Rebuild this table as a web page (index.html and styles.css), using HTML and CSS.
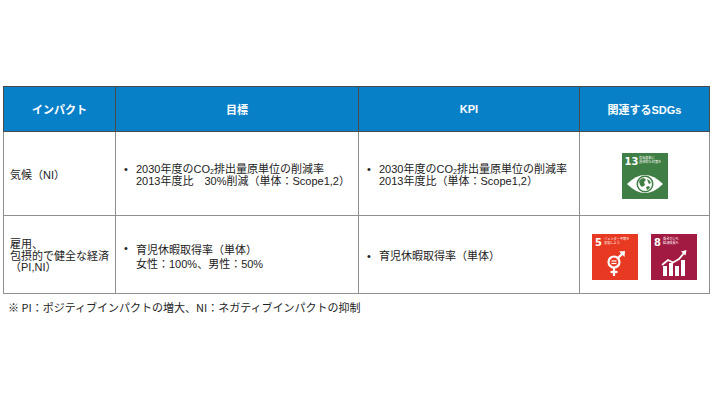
FILE: index.html
```html
<!DOCTYPE html>
<html lang="ja">
<head>
<meta charset="utf-8">
<link rel="stylesheet" href="styles.css">
</head>
<body>
<div class="wrap">
<table class="kpi">
  <colgroup>
    <col class="c1"><col class="c2"><col class="c3"><col class="c4">
  </colgroup>
  <thead>
    <tr class="head">
      <th>インパクト</th>
      <th>目標</th>
      <th>KPI</th>
      <th>関連するSDGs</th>
    </tr>
  </thead>
  <tbody>
    <tr class="r1">
      <td class="imp">気候（NI）</td>
      <td>
        <div class="item"><span class="dot">•</span><div>2030年度のCO<sub>2</sub>排出量原単位の削減率<br>2013年度比　30%削減（単体：Scope1,2）</div></div>
      </td>
      <td>
        <div class="item"><span class="dot">•</span><div>2030年度のCO<sub>2</sub>排出量原単位の削減率<br>2013年度比（単体：Scope1,2）</div></div>
      </td>
      <td class="sdg">
        <div class="icons">
          <svg class="icon" viewBox="0 0 46 46" width="46" height="46">
            <rect width="46" height="46" fill="#3f7e44"/>
            <text x="2.5" y="12" class="num">13</text>
            <text x="17" y="6" class="tiny">気候変動に</text>
            <text x="17" y="10" class="tiny">具体的な対策を</text>
            <path d="M5 31 Q23 13 41 31 Q23 49 5 31 Z" fill="#fff"/>
            <circle cx="23" cy="31" r="8.5" fill="#3f7e44"/>
            <circle cx="23" cy="31" r="7" fill="#fff"/>
            <path d="M17 28 Q19 25 22 25 L24 27 L22 29 L23 32 L20 34 L18 32 Z" fill="#3f7e44"/>
            <path d="M25 26 Q28 27 29 30 L27 31 L26 29 Z" fill="#3f7e44"/>
            <path d="M24 34 L27 33 L28 35 L25 37 Z" fill="#3f7e44"/>
          </svg>
        </div>
      </td>
    </tr>
    <tr class="r2">
      <td class="imp">雇用、<br>包摂的で健全な経済<br>（PI,NI）</td>
      <td>
        <div class="item"><span class="dot">•</span><div class="tall">育児休暇取得率（単体）<br>女性：100%、男性：50%</div></div>
      </td>
      <td>
        <div class="item"><span class="dot">•</span><div>育児休暇取得率（単体）</div></div>
      </td>
      <td class="sdg">
        <div class="icons two">
          <svg class="icon" viewBox="0 0 46 46" width="46" height="46">
            <rect width="46" height="46" fill="#e83a22"/>
            <text x="3" y="12" class="num">5</text>
            <text x="12" y="6" class="tiny">ジェンダー平等を</text>
            <text x="12" y="10" class="tiny">実現しよう</text>
            <circle cx="22" cy="28" r="5.5" fill="none" stroke="#fff" stroke-width="2.2"/>
            <line x1="19.5" y1="27" x2="24.5" y2="27" stroke="#fff" stroke-width="1.2"/>
            <line x1="19.5" y1="29.5" x2="24.5" y2="29.5" stroke="#fff" stroke-width="1.2"/>
            <line x1="26" y1="24" x2="31" y2="19" stroke="#fff" stroke-width="2.2"/>
            <path d="M27 17.5 L33 17 L32.5 23 Z" fill="#fff"/>
            <line x1="22" y1="33.5" x2="22" y2="42" stroke="#fff" stroke-width="2.2"/>
            <line x1="18.5" y1="38" x2="25.5" y2="38" stroke="#fff" stroke-width="2.2"/>
          </svg>
          <svg class="icon" viewBox="0 0 46 46" width="46" height="46">
            <rect width="46" height="46" fill="#a21942"/>
            <text x="3" y="12" class="num">8</text>
            <text x="12" y="6" class="tiny">働きがいも</text>
            <text x="12" y="10" class="tiny">経済成長も</text>
            <rect x="12" y="32" width="4" height="10" fill="#fff"/>
            <rect x="18" y="29" width="4" height="13" fill="#fff"/>
            <rect x="24" y="32" width="4" height="10" fill="#fff"/>
            <rect x="30" y="26" width="4" height="16" fill="#fff"/>
            <polyline points="11,31 17,26 22,28.5 28,25 33,19" fill="none" stroke="#fff" stroke-width="1.8"/>
            <path d="M30 17.5 L35.5 16 L34.5 21.5 Z" fill="#fff"/>
          </svg>
        </div>
      </td>
    </tr>
  </tbody>
</table>
<p class="note">※ PI：ポジティブインパクトの増大、NI：ネガティブインパクトの抑制</p>
</div>
</body>
</html>
```
FILE: styles.css
```css
html, body {
  margin: 0;
  padding: 0;
  background: #fff;
}
body {
  font-family: "Liberation Sans", "Noto Sans CJK JP", sans-serif;
  font-size: 11px;
  color: #222;
}
.wrap {
  padding: 86px 0 0 3px;
}
.kpi {
  width: 706px;
  border-collapse: collapse;
  table-layout: fixed;
}
.c1 { width: 112px; }
.c2 { width: 243px; }
.c3 { width: 221px; }
.c4 { width: 130px; }
.head th {
  height: 44px;
  padding: 0;
  background: #0880c8;
  color: #fff;
  font-weight: bold;
  font-size: 11px;
  text-align: center;
  vertical-align: middle;
  border: 1px solid #4a4a4a;
}
.kpi td {
  border: 1px solid #8f8f8f;
  vertical-align: middle;
  padding: 4px 6px 0 6px;
  line-height: 11.5px;
}
.r1 td { height: 79px; }
.r2 td { height: 73px; }
.kpi td.imp {
  padding-left: 6px;
}
.item {
  display: flex;
  gap: 7px;
  padding-left: 2px;
}
.kpi td:nth-child(3) .item { padding-left: 2px; }
.dot {
  width: 5px;
  flex: none;
}
.tall { line-height: 14px; }
sub {
  font-size: 7px;
  line-height: 0;
  vertical-align: -1px;
}
.sdg { text-align: center; }
.icons {
  display: flex;
  justify-content: center;
  gap: 13px;
}
.icons.two { justify-content: flex-start; padding-left: 6px; }
.icon { display: block; }
.num {
  font-family: "DejaVu Sans Condensed", "Liberation Sans", sans-serif;
  font-weight: bold;
  font-size: 11px;
  fill: #fff;
}
.tiny {
  font-family: "Noto Sans CJK JP", sans-serif;
  font-size: 3.2px;
  fill: #fff;
}
.note {
  margin: 6px 0 0 5px;
  font-family: "Noto Sans CJK JP", "Liberation Sans", sans-serif;
  font-size: 11px;
  line-height: 14px;
  color: #222;
}
```
